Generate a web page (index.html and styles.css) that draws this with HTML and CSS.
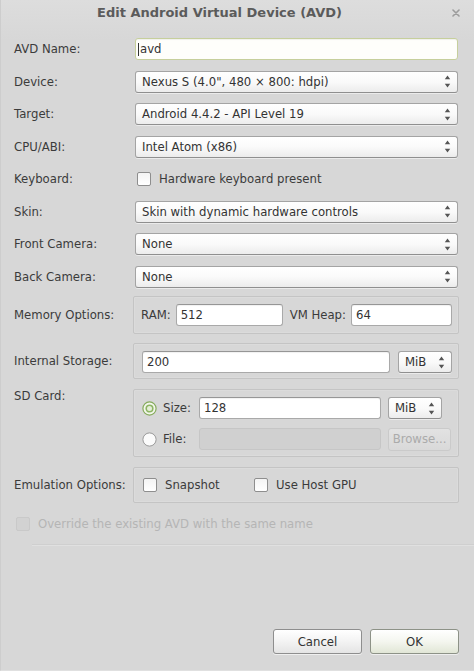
FILE: index.html
```html
<!DOCTYPE html>
<html>
<head>
<meta charset="utf-8">
<link rel="stylesheet" href="styles.css">
</head>
<body>
<div class="window">
  <div class="titlebar">
    <span class="title">Edit Android Virtual Device (AVD)</span>
    <svg class="close" width="8" height="8" viewBox="0 0 8 8"><path d="M1 1 L7 7 M7 1 L1 7" stroke="#9c9c9c" stroke-width="1.6" stroke-linecap="round"/></svg>
  </div>

  <div class="form">
    <div class="row">
      <span class="label">AVD Name:</span>
      <div class="field focus"><span class="caret"></span>avd</div>
    </div>
    <div class="row">
      <span class="label">Device:</span>
      <div class="combo"><span class="ctext">Nexus S (4.0", 480 × 800: hdpi)</span><svg class="arrows" width="7" height="13" viewBox="0 0 7 13"><path d="M0.8 4.2 L3.5 0.4 L6.2 4.2Z M0.8 8.8 L6.2 8.8 L3.5 12.6Z" fill="#555"/></svg></div>
    </div>
    <div class="row">
      <span class="label">Target:</span>
      <div class="combo"><span class="ctext">Android 4.4.2 - API Level 19</span><svg class="arrows" width="7" height="13" viewBox="0 0 7 13"><path d="M0.8 4.2 L3.5 0.4 L6.2 4.2Z M0.8 8.8 L6.2 8.8 L3.5 12.6Z" fill="#555"/></svg></div>
    </div>
    <div class="row">
      <span class="label">CPU/ABI:</span>
      <div class="combo"><span class="ctext">Intel Atom (x86)</span><svg class="arrows" width="7" height="13" viewBox="0 0 7 13"><path d="M0.8 4.2 L3.5 0.4 L6.2 4.2Z M0.8 8.8 L6.2 8.8 L3.5 12.6Z" fill="#555"/></svg></div>
    </div>
    <div class="row">
      <span class="label">Keyboard:</span>
      <div class="check-item kb"><span class="checkbox"></span><span>Hardware keyboard present</span></div>
    </div>
    <div class="row">
      <span class="label">Skin:</span>
      <div class="combo"><span class="ctext">Skin with dynamic hardware controls</span><svg class="arrows" width="7" height="13" viewBox="0 0 7 13"><path d="M0.8 4.2 L3.5 0.4 L6.2 4.2Z M0.8 8.8 L6.2 8.8 L3.5 12.6Z" fill="#555"/></svg></div>
    </div>
    <div class="row">
      <span class="label">Front Camera:</span>
      <div class="combo"><span class="ctext">None</span><svg class="arrows" width="7" height="13" viewBox="0 0 7 13"><path d="M0.8 4.2 L3.5 0.4 L6.2 4.2Z M0.8 8.8 L6.2 8.8 L3.5 12.6Z" fill="#555"/></svg></div>
    </div>
    <div class="row">
      <span class="label">Back Camera:</span>
      <div class="combo"><span class="ctext">None</span><svg class="arrows" width="7" height="13" viewBox="0 0 7 13"><path d="M0.8 4.2 L3.5 0.4 L6.2 4.2Z M0.8 8.8 L6.2 8.8 L3.5 12.6Z" fill="#555"/></svg></div>
    </div>

    <div class="grow mem">
      <span class="glabel">Memory Options:</span>
      <div class="group mem-group">
        <span>RAM:</span>
        <div class="field ram">512</div>
        <span class="vmlabel">VM Heap:</span>
        <div class="field heap">64</div>
      </div>
    </div>

    <div class="grow internal">
      <span class="glabel">Internal Storage:</span>
      <div class="group int-group">
        <div class="field flex">200</div>
        <div class="combo unit"><span class="ctext">MiB</span><svg class="arrows" width="7" height="13" viewBox="0 0 7 13"><path d="M0.8 4.2 L3.5 0.4 L6.2 4.2Z M0.8 8.8 L6.2 8.8 L3.5 12.6Z" fill="#555"/></svg></div>
      </div>
    </div>

    <div class="grow sd">
      <span class="glabel top">SD Card:</span>
      <div class="group sd-group">
        <div class="sdrow">
          <div class="radio-item">
            <svg class="radio" width="15" height="15" viewBox="0 0 15 15"><circle cx="7.5" cy="7.5" r="6.6" fill="#f3f7ec" stroke="#86ab5c" stroke-width="1.2"/><circle cx="7.5" cy="7.5" r="3.3" fill="#e4eed7" stroke="#8db464" stroke-width="1.6"/></svg>
            <span>Size:</span>
          </div>
          <div class="field sdfield">128</div>
          <div class="combo unit"><span class="ctext">MiB</span><svg class="arrows" width="7" height="13" viewBox="0 0 7 13"><path d="M0.8 4.2 L3.5 0.4 L6.2 4.2Z M0.8 8.8 L6.2 8.8 L3.5 12.6Z" fill="#555"/></svg></div>
        </div>
        <div class="sdrow">
          <div class="radio-item">
            <svg class="radio" width="15" height="15" viewBox="0 0 15 15"><circle cx="7.5" cy="7.5" r="6.6" fill="#fbfbfb" stroke="#9a9a9a" stroke-width="1"/></svg>
            <span>File:</span>
          </div>
          <div class="field sdfield disabled"></div>
          <div class="button browse">Browse...</div>
        </div>
      </div>
    </div>

    <div class="grow emu">
      <span class="glabel">Emulation Options:</span>
      <div class="group emu-group">
        <div class="check-item snap"><span class="checkbox"></span><span>Snapshot</span></div>
        <div class="check-item"><span class="checkbox"></span><span>Use Host GPU</span></div>
      </div>
    </div>

    <div class="row override">
      <div class="check-item dis"><span class="checkbox"></span><span>Override the existing AVD with the same name</span></div>
    </div>
  </div>

  <div class="separator"></div>
  <div class="spacer"></div>

  <div class="buttons">
    <div class="button dlg">Cancel</div>
    <div class="button dlg ok">OK</div>
  </div>
</div>
</body>
</html>
```

FILE: styles.css
```css
* { box-sizing: border-box; }
html, body { margin: 0; padding: 0; }
body {
  width: 474px;
  height: 671px;
  overflow: hidden;
  background: #d7d7d7;
  font-family: "DejaVu Sans", "Noto Sans", sans-serif;
  font-size: 11.7px;
  color: #3b3b3b;
}
.window {
  height: 671px;
  display: flex;
  flex-direction: column;
  background: linear-gradient(#dddddd, #d7d7d7 40px);
  border-left: 1px solid #cdcdcd;
  border-bottom: 1px solid #e0e0e0;
}
.titlebar {
  height: 25px;
  flex: none;
  display: flex;
  align-items: center;
  padding: 0 14px 0 96px;
}
.title {
  font-size: 13px;
  font-weight: bold;
  color: #5b5b5b;
}
.close { margin-left: auto; margin-top: 1px; }

.form {
  display: flex;
  flex-direction: column;
  padding: 13px 16px 0 13px;
}
.row {
  display: flex;
  align-items: center;
  height: 22px;
  margin-top: 10.5px;
}
.row:first-child { margin-top: 0; }
.label { width: 121px; flex: none; }

.field {
  height: 22px;
  background: #fff;
  border: 1px solid #a9a9a9;
  border-top-color: #969696;
  border-radius: 3px;
  box-shadow: inset 0 1px 1px rgba(0,0,0,0.06);
  display: flex;
  align-items: center;
  padding-left: 4px;
  color: #333;
}
.row .field { flex: 1; }
.field.focus {
  border-color: #c6cf9c;
  background: #fefefb;
  padding-left: 2px;
}
.caret {
  width: 1px;
  height: 13px;
  background: #333;
  margin-right: 1px;
}
.combo {
  flex: 1;
  height: 22px;
  display: flex;
  align-items: center;
  justify-content: space-between;
  padding: 0 6px 0 6px;
  border: 1px solid #a4a4a4;
  border-bottom-color: #8f8f8f;
  border-radius: 3px;
  background: linear-gradient(#ffffff, #fafafa 50%, #ececec);
  box-shadow: 0 1px 0 rgba(255,255,255,0.5);
  color: #333;
}
.arrows { flex: none; }

.check-item {
  display: flex;
  align-items: center;
  gap: 8px;
}
.checkbox {
  width: 14px;
  height: 14px;
  flex: none;
  border: 1px solid #8e8e8e;
  border-radius: 2px;
  background: linear-gradient(#f4f4f4, #ffffff);
}
.kb { margin-left: 2px; }

.grow {
  display: flex;
  align-items: center;
}
.glabel { width: 119px; flex: none; }
.glabel.top { align-self: flex-start; margin-top: 0; }
.group {
  flex: 1;
  margin-right: -1px;
  border: 1px solid #c4c4c4;
  border-radius: 2px;
  box-shadow: inset 0 0 0 1px #dbdbdb;
}
.mem { margin-top: 8.5px; }
.mem-group {
  display: flex;
  align-items: center;
  padding: 7px 6px 7px 7px;
}
.field.ram { width: 107px; margin-left: 5px; }
.vmlabel { margin-left: 7px; }
.field.heap { flex: 1; margin-left: 5px; }

.internal { margin-top: 9px; }
.int-group {
  display: flex;
  align-items: center;
  gap: 8px;
  padding: 7px 6px 5px 8px;
}
.field.flex { flex: 1; }
.combo.unit {
  flex: none;
  width: 54px;
}

.sd { margin-top: 10px; }
.sd-group {
  display: flex;
  flex-direction: column;
  gap: 9px;
  padding: 7px 7px 6px 9px;
}
.sdrow {
  display: flex;
  align-items: center;
  height: 22px;
}
.radio-item {
  width: 56px;
  flex: none;
  display: flex;
  align-items: center;
  gap: 6px;
}
.radio { flex: none; margin-left: -1px; }
.field.sdfield { width: 182px; margin-right: 7px; }
.field.disabled {
  background: #d0d0d0;
  border-color: #c6c6c6;
  box-shadow: none;
}

.button {
  display: flex;
  align-items: center;
  justify-content: center;
  border: 1px solid #939393;
  border-radius: 3px;
  background: linear-gradient(#ffffff, #f3f3f3 50%, #e4e4e4);
  color: #333;
}
.button.browse {
  width: 63px;
  height: 23px;
  color: #ababab;
  border-color: #cacaca;
  background: linear-gradient(#e2e2e2, #d9d9d9);
}

.emu { margin-top: 10px; }
.emu-group {
  display: flex;
  align-items: center;
  padding: 6px 6px 6px 9px;
  height: 36px;
}
.snap { width: 111px; }

.override { margin-top: 10px; padding-left: 2px; }
.dis { color: #b5b5b5; }
.dis .checkbox {
  background: #d2d2d2;
  border-color: #c9c9c9;
}

.separator {
  flex: none;
  margin: 9px 0 0 31px;
  height: 2px;
  border-top: 1px solid #cfcfcf;
  border-bottom: 1px solid #e0e0e0;
}
.spacer { flex: 1; }
.buttons {
  flex: none;
  display: flex;
  justify-content: flex-end;
  gap: 8px;
  padding: 0 15px 0 0;
  margin-bottom: 16px;
}
.button.dlg {
  width: 89px;
  height: 25px;
  border-color: #8e8e8e;
  box-shadow: 0 1px 0 rgba(255,255,255,0.6);
}
.button.ok {
  background: linear-gradient(#ffffff, #f4f6ef 50%, #e1e6d6);
  border-color: #8d9287;
}
```
